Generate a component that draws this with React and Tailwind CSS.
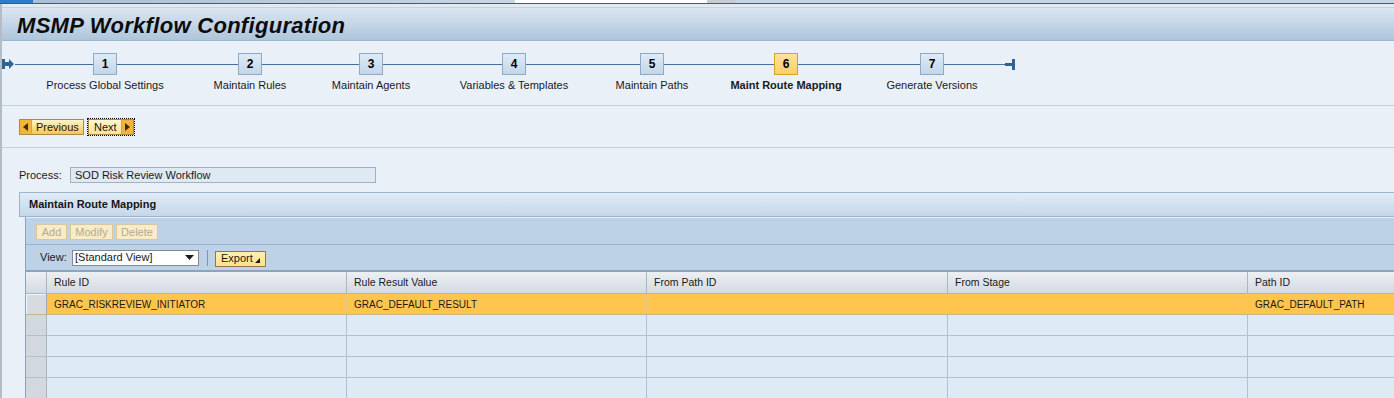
import React from "react";

const steps = [
  { n: 1, label: "Process Global Settings", w: "w-[180px]" },
  { n: 2, label: "Maintain Rules", w: "w-[110px]" },
  { n: 3, label: "Maintain Agents", w: "w-[132px]" },
  { n: 4, label: "Variables & Templates", w: "w-[154px]" },
  { n: 5, label: "Maintain Paths", w: "w-[122px]" },
  { n: 6, label: "Maint Route Mapping", w: "w-[146px]", active: true },
  { n: 7, label: "Generate Versions", w: "w-[146px]" },
];

const columns = [
  { title: "Rule ID", w: "w-[300px]" },
  { title: "Rule Result Value", w: "w-[300px]" },
  { title: "From Path ID", w: "w-[301px]" },
  { title: "From Stage", w: "w-[300px]" },
  { title: "Path ID", w: "w-[300px]" },
];

const firstRow = ["GRAC_RISKREVIEW_INITIATOR", "GRAC_DEFAULT_RESULT", "", "", "GRAC_DEFAULT_PATH"];

const Triangle = ({ dir }) => (
  <svg width="5" height="8" viewBox="0 0 5 8">
    {dir === "left" ? (
      <path d="M5 0 L0 4 L5 8 Z" fill="#3a2c06" />
    ) : (
      <path d="M0 0 L5 4 L0 8 Z" fill="#3a2c06" />
    )}
  </svg>
);

const Step = ({ step }) => (
  <div className={`${step.w} flex flex-col items-center`}>
    <div className="flex items-center w-full h-[22px]">
      <div className="flex-1 h-px bg-[#43709e]" />
      <div
        className={`w-[24px] h-[22px] border flex items-center justify-center text-[12px] font-bold text-black ${
          step.active
            ? "border-[#d8a224] bg-linear-to-b from-[#fde29a] to-[#f9cf6c]"
            : "border-[#8eaac7] bg-linear-to-b from-[#dfeaf5] to-[#c3d6ea]"
        }`}
      >
        {step.n}
      </div>
      <div className="flex-1 h-px bg-[#43709e]" />
    </div>
    <div
      className={`mt-[4px] text-[11px] leading-[13px] whitespace-nowrap text-[#1a1a1a] ${
        step.active ? "font-bold" : ""
      }`}
    >
      {step.label}
    </div>
  </div>
);

const DisabledBtn = ({ children, w }) => (
  <div
    className={`${w} h-[16px] border border-[#d8c89c] bg-[#f6ecca] text-[#b8aa8c] text-[11px] leading-[14px] flex items-center justify-center`}
  >
    {children}
  </div>
);

export default function App() {
  return (
    <div className="w-[1394px] h-[398px] overflow-hidden bg-[#e9f0f7] font-['Liberation_Sans',Arial,sans-serif] flex flex-col">
      {/* browser strip */}
      <div className="h-[3px] flex shrink-0">
        <div className="w-[33px] bg-[#2f7cc6]" />
        <div className="w-[482px] bg-linear-to-r from-[#a9bfd6] to-[#c9d6e3]" />
        <div className="w-[192px] bg-white" />
        <div className="w-[28px] bg-[#c7ccd2]" />
        <div className="flex-1 bg-[#c3d4e6]" />
      </div>
      <div className="h-px bg-[#4d5966] shrink-0" />

      <div className="flex-1 flex flex-col border-l-2 border-[#b4bdc7]">
        <div className="h-[4px] bg-[#e1e9f1] border-b border-[#c3d2e1] shrink-0" />

        {/* page header */}
        <div className="h-[33px] shrink-0 flex items-center pl-[15px] pt-[3px] bg-linear-to-b from-[#dbe6f1] to-[#aec5dc] border-b border-[#9fb6cd]">
          <h1 className="text-[22px] leading-[26px] font-bold italic text-[#0c0c0c] tracking-[0.3px]">
            MSMP Workflow Configuration
          </h1>
        </div>

        {/* roadmap */}
        <div className="h-[64px] shrink-0 pt-[12px] flex items-start">
          <div className="h-[22px] w-[13px] flex items-center">
            <div className="w-[3px] h-[10px] bg-[#2e6398]" />
            <svg width="10" height="10" viewBox="0 0 10 10">
              <path d="M0 3 H4 V0 L9 5 L4 10 V7 H0 Z" fill="#2e6398" />
            </svg>
          </div>
          {steps.map((s) => (
            <Step key={s.n} step={s} />
          ))}
          <div className="h-[22px] flex items-center">
            <div className="w-[7px] h-[3px] bg-[#2e6398]" />
            <div className="w-[3px] h-[11px] bg-[#2e6398]" />
          </div>
        </div>
        <div className="h-px bg-[#c4cfda] shrink-0" />

        {/* previous / next */}
        <div className="h-[41px] shrink-0 pt-[13px] pl-[17px] flex items-start gap-[4px]">
          <div className="h-[16px] w-[65px] border border-[#a88b46] bg-linear-to-b from-[#fff4c8] to-[#f7c652] flex items-center text-[11px] text-[#1d1600]">
            <div className="w-[12px] h-full flex items-center justify-center bg-[#f3b43a] border-r border-[#d9a63a]">
              <Triangle dir="left" />
            </div>
            <span className="pl-[4px]">Previous</span>
          </div>
          <div className="h-[16px] w-[46px] outline-1 outline-dotted outline-black border border-[#a88b46] bg-linear-to-b from-[#fff6d2] to-[#fbe19a] flex items-center text-[11px] text-[#1d1600]">
            <span className="pl-[5px] flex-1">Next</span>
            <div className="w-[12px] h-full flex items-center justify-center bg-[#f3b43a] border-l border-[#d9a63a]">
              <Triangle dir="right" />
            </div>
          </div>
        </div>
        <div className="h-px bg-[#c4cfda] shrink-0" />

        {/* process */}
        <div className="h-[35px] pt-[19px] pl-[17px] flex items-start shrink-0">
          <span className="w-[51px] text-[11px] leading-[16px] text-[#1a1a1a]">Process:</span>
          <div className="w-[306px] h-[16px] border border-[#a3b0bf] bg-[#dfe9f3] text-[11px] leading-[14px] pl-[4px] text-[#1a1a1a]">
            SOD Risk Review Workflow
          </div>
        </div>

        {/* panel */}
        <div className="mt-[9px] ml-[17px] flex-1 flex flex-col">
          <div className="h-[25px] shrink-0 border border-r-0 border-[#9db4cd] bg-linear-to-b from-[#e1ebf5] to-[#c4d7ea] flex items-center pl-[9px] text-[11px] font-bold text-[#151515]">
            Maintain Route Mapping
          </div>
          <div className="ml-[6px] flex-1 border-l border-[#8fa3b8] bg-[#bdd2e7] flex flex-col">
            <div className="h-[28px] shrink-0 border-t border-[#e6eef6] border-b border-b-[#9ab3cd] pt-[6px] pl-[10px] flex items-start gap-[3px]">
              <DisabledBtn w="w-[31px]">Add</DisabledBtn>
              <DisabledBtn w="w-[43px]">Modify</DisabledBtn>
              <DisabledBtn w="w-[42px]">Delete</DisabledBtn>
            </div>
            <div className="h-[25px] shrink-0 flex items-center pl-[14px] text-[11px] text-[#1a1a1a]">
              <span className="w-[32px]">View:</span>
              <div className="w-[127px] h-[16px] border border-[#7f8a96] bg-white flex items-center pl-[2px] justify-between pr-[4px]">
                <span>[Standard View]</span>
                <svg width="9" height="5" viewBox="0 0 9 5">
                  <path d="M0 0 H9 L4.5 5 Z" fill="#1a1a1a" />
                </svg>
              </div>
              <div className="ml-[8px] w-px h-[16px] bg-[#7f95ad]" />
              <div className="ml-[7px] mt-[2px] w-[51px] h-[16px] border border-[#8c7b48] bg-linear-to-b from-[#fff1b3] to-[#fbe084] flex items-center pl-[5px] gap-[2px]">
                <span>Export</span>
                <svg width="5" height="5" viewBox="0 0 5 5" className="mt-[3px]">
                  <path d="M5 0 V5 H0 Z" fill="#1a1a1a" />
                </svg>
              </div>
            </div>
            <div className="h-[2px] bg-[#8ea4bc] shrink-0" />

            {/* table */}
            <div className="flex flex-col">
              <div className="flex h-[22px] border-b border-[#a9b6c3] bg-linear-to-b from-[#edf0f3] to-[#d3dae1]">
                <div className="w-[21px] shrink-0 border-r border-[#a9b6c3]" />
                {columns.map((c) => (
                  <div
                    key={c.title}
                    className={`${c.w} shrink-0 border-r border-[#a9b6c3] flex items-center pl-[7px] text-[10.5px] text-[#1a1a1a]`}
                  >
                    {c.title}
                  </div>
                ))}
              </div>
              <div className="flex h-[21px] border-b border-[#c7b68a] bg-[#ffc54f]">
                <div className="w-[21px] shrink-0 border-r border-[#9fa9b4] bg-[#d6dbe0] shadow-[inset_1px_1px_0_#f2f4f6]" />
                {firstRow.map((v, i) => (
                  <div
                    key={i}
                    className={`${columns[i].w} shrink-0 border-r border-[#e0c98c] flex items-center pl-[7px] text-[10px] text-[#1a1a1a]`}
                  >
                    {v}
                  </div>
                ))}
              </div>
              {[0, 1, 2, 3].map((r) => (
                <div key={r} className="flex h-[21px] border-b border-[#b3c1cf] bg-[#deeaf4]">
                  <div className="w-[21px] shrink-0 border-r border-[#a9b4c0] bg-[#d3d8de]" />
                  {columns.map((c) => (
                    <div key={c.title} className={`${c.w} shrink-0 border-r border-[#b3c1cf]`} />
                  ))}
                </div>
              ))}
            </div>
          </div>
        </div>
      </div>
    </div>
  );
}
